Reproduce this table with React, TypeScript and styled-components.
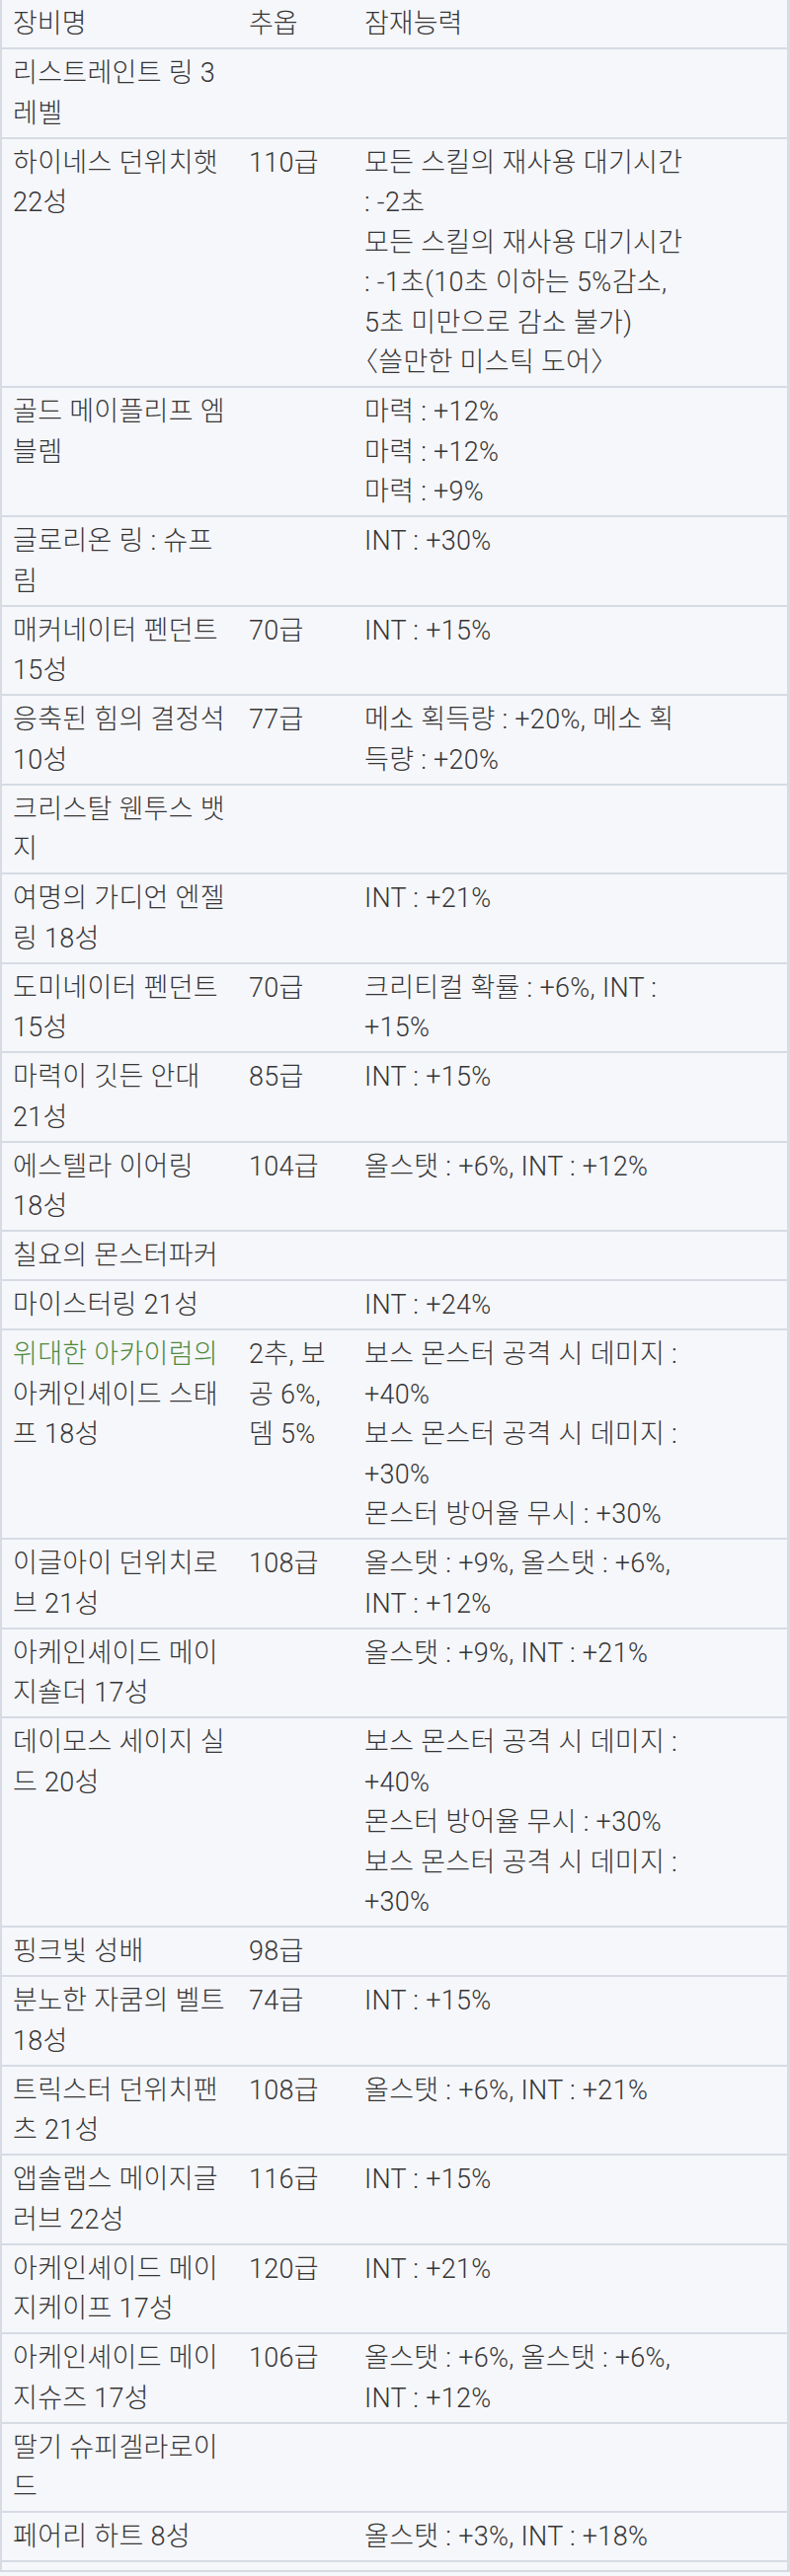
import { FC, ReactNode } from "react";
import styled, { createGlobalStyle } from "styled-components";

const GlobalStyle = createGlobalStyle`
  html, body {
    margin: 0;
    padding: 0;
    background: #f6f7fb;
  }
  body {
    font-family: "Roboto", "Noto Sans CJK KR", "Noto Sans", sans-serif;
    color: #363636;
  }
`;

const GearTable = styled.table`
  width: 800px;
  border-collapse: collapse;
  table-layout: fixed;
  background: #f6f7fb;
  border-left: 2px solid #d6dbe4;
  border-right: 3px solid #d6dbe4;
  font-size: 27px;
  font-weight: 300;
  line-height: 40.5px;
`;

const HeadCell = styled.th`
  text-align: left;
  font-weight: 300;
  padding: 4px 4px 3.5px 11px;
  border-bottom: 2px solid #d6dbe4;
  vertical-align: top;
  white-space: pre-line;
`;

const Cell = styled.td`
  padding: 4px 4px 3.5px 11px;
  border-bottom: 2px solid #d6dbe4;
  vertical-align: top;
  white-space: pre-line;
  letter-spacing: 0.3px;
`;

const SetName = styled.span`
  color: #4f8a3d;
`;

const SkillNote = styled.span`
  margin-left: -13px;
`;

interface GearRow {
  name: ReactNode;
  flame?: string;
  potential?: ReactNode;
}

const rows: GearRow[] = [
  { name: "리스트레인트 링 3\n레벨" },
  {
    name: "하이네스 던위치햇\n22성",
    flame: "110급",
    potential: (
      <>
        {
          "모든 스킬의 재사용 대기시간\n: -2초\n모든 스킬의 재사용 대기시간\n: -1초(10초 이하는 5%감소,\n5초 미만으로 감소 불가)\n"
        }
        <SkillNote>〈쓸만한 미스틱 도어〉</SkillNote>
      </>
    ),
  },
  {
    name: "골드 메이플리프 엠\n블렘",
    potential: "마력 : +12%\n마력 : +12%\n마력 : +9%",
  },
  { name: "글로리온 링 : 슈프\n림", potential: "INT : +30%" },
  { name: "매커네이터 펜던트\n15성", flame: "70급", potential: "INT : +15%" },
  {
    name: "응축된 힘의 결정석\n10성",
    flame: "77급",
    potential: "메소 획득량 : +20%, 메소 획\n득량 : +20%",
  },
  { name: "크리스탈 웬투스 뱃\n지" },
  { name: "여명의 가디언 엔젤\n링 18성", potential: "INT : +21%" },
  {
    name: "도미네이터 펜던트\n15성",
    flame: "70급",
    potential: "크리티컬 확률 : +6%, INT :\n+15%",
  },
  { name: "마력이 깃든 안대\n21성", flame: "85급", potential: "INT : +15%" },
  {
    name: "에스텔라 이어링\n18성",
    flame: "104급",
    potential: "올스탯 : +6%, INT : +12%",
  },
  { name: "칠요의 몬스터파커" },
  { name: "마이스터링 21성", potential: "INT : +24%" },
  {
    name: (
      <>
        <SetName>위대한 아카이럼의</SetName>
        {"\n아케인셰이드 스태\n프 18성"}
      </>
    ),
    flame: "2추, 보\n공 6%,\n뎀 5%",
    potential:
      "보스 몬스터 공격 시 데미지 :\n+40%\n보스 몬스터 공격 시 데미지 :\n+30%\n몬스터 방어율 무시 : +30%",
  },
  {
    name: "이글아이 던위치로\n브 21성",
    flame: "108급",
    potential: "올스탯 : +9%, 올스탯 : +6%,\nINT : +12%",
  },
  {
    name: "아케인셰이드 메이\n지숄더 17성",
    potential: "올스탯 : +9%, INT : +21%",
  },
  {
    name: "데이모스 세이지 실\n드 20성",
    potential:
      "보스 몬스터 공격 시 데미지 :\n+40%\n몬스터 방어율 무시 : +30%\n보스 몬스터 공격 시 데미지 :\n+30%",
  },
  { name: "핑크빛 성배", flame: "98급" },
  { name: "분노한 자쿰의 벨트\n18성", flame: "74급", potential: "INT : +15%" },
  {
    name: "트릭스터 던위치팬\n츠 21성",
    flame: "108급",
    potential: "올스탯 : +6%, INT : +21%",
  },
  { name: "앱솔랩스 메이지글\n러브 22성", flame: "116급", potential: "INT : +15%" },
  {
    name: "아케인셰이드 메이\n지케이프 17성",
    flame: "120급",
    potential: "INT : +21%",
  },
  {
    name: "아케인셰이드 메이\n지슈즈 17성",
    flame: "106급",
    potential: "올스탯 : +6%, 올스탯 : +6%,\nINT : +12%",
  },
  { name: "딸기 슈피겔라로이\n드" },
  { name: "페어리 하트 8성", potential: "올스탯 : +3%, INT : +18%" },
  { name: "" },
];

const App: FC = () => {
  return (
    <>
      <GlobalStyle />
      <GearTable>
        <colgroup>
          <col style={{ width: 240 }} />
          <col style={{ width: 117 }} />
          <col />
        </colgroup>
        <thead>
          <tr>
            <HeadCell>장비명</HeadCell>
            <HeadCell>추옵</HeadCell>
            <HeadCell>잠재능력</HeadCell>
          </tr>
        </thead>
        <tbody>
          {rows.map((row, i) => (
            <tr key={i}>
              <Cell>{row.name}</Cell>
              <Cell>{row.flame}</Cell>
              <Cell>{row.potential}</Cell>
            </tr>
          ))}
        </tbody>
      </GearTable>
    </>
  );
};

export default App;
